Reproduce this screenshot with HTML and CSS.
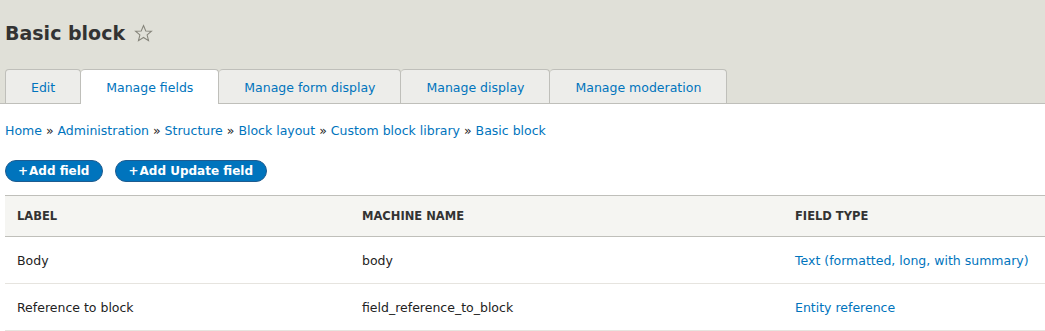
FILE: index.html
```html
<!DOCTYPE html>
<html lang="en">
<head>
<meta charset="utf-8">
<title>Basic block</title>
<link rel="stylesheet" href="styles.css">
</head>
<body>
<header class="page-header">
  <h1 class="page-title">Basic block
    <svg class="star" viewBox="0 0 20 20" width="19" height="19" aria-hidden="true"><path d="M10 1.6 L12.4 7.3 L18.4 7.6 L13.8 11.5 L15.3 17.5 L10 14.2 L4.7 17.5 L6.2 11.5 L1.6 7.6 L7.6 7.3 Z" fill="none" stroke="#85847a" stroke-width="1.1" stroke-linejoin="miter"/></svg>
  </h1>
  <nav class="tabs">
    <a class="tab" href="#">Edit</a>
    <a class="tab is-active" href="#">Manage fields</a>
    <a class="tab" href="#">Manage form display</a>
    <a class="tab" href="#">Manage display</a>
    <a class="tab" href="#">Manage moderation</a>
  </nav>
</header>
<main class="content">
  <nav class="breadcrumb">
    <a href="#">Home</a> » <a href="#">Administration</a> » <a href="#">Structure</a> » <a href="#">Block layout</a> » <a href="#">Custom block library</a> » <a href="#">Basic block</a>
  </nav>
  <div class="actions">
    <a class="button" href="#"><span class="plus">+</span>Add field</a>
    <a class="button" href="#"><span class="plus">+</span>Add Update field</a>
  </div>
  <table class="fields">
    <thead>
      <tr><th class="c1">Label</th><th class="c2">Machine name</th><th class="c3">Field type</th></tr>
    </thead>
    <tbody>
      <tr><td>Body</td><td>body</td><td><a href="#">Text (formatted, long, with summary)</a></td></tr>
      <tr><td>Reference to block</td><td>field_reference_to_block</td><td><a href="#">Entity reference</a></td></tr>
    </tbody>
  </table>
</main>
</body>
</html>
```
FILE: styles.css
```css
html, body { margin: 0; padding: 0; background: #fff; }
body {
  font-family: "DejaVu Sans", "Open Sans", sans-serif;
  font-size: 12.5px;
  color: #222;
}
a { color: #0074bd; text-decoration: none; }

.page-header {
  background: #e0e0d8;
  padding: 17px 0 0 5px;
  border-bottom: 1px solid #bfbfba;
}
.page-title {
  margin: 0;
  font-size: 19px;
  font-weight: bold;
  color: #333;
  line-height: 32px;
  display: flex;
  align-items: center;
  gap: 9px;
}
.star { display: block; }

.tabs {
  display: flex;
  margin-top: 20px;
}
.tab {
  display: block;
  background: #ededea;
  border: 1px solid #bfbfba;
  border-bottom: none;
  border-left: none;
  border-radius: 4px 4px 0 0;
  padding: 0 25px;
  height: 33px;
  line-height: 35px;
  margin-bottom: -1px;
}
.tab:first-child { border-left: 1px solid #bfbfba; }
.tab.is-active {
  background: #fff;
  height: 34px;
  position: relative;
  z-index: 1;
}

.content { padding: 0 0 0 5px; }
.breadcrumb {
  padding-top: 18px;
  line-height: 18px;
}
.actions {
  display: flex;
  gap: 12px;
  margin-top: 20px;
}
.button {
  display: block;
  background: #0074bd;
  border: 1px solid #1e5c90;
  color: #fff;
  font-size: 12px;
  font-weight: bold;
  border-radius: 12px;
  height: 20px;
  line-height: 20px;
  padding: 0 13px 0 12px;
}
.plus { margin-right: 1px; }

.fields {
  margin-top: 13px;
  width: 100%;
  border-collapse: collapse;
}
.fields th {
  background: #f5f5f2;
  border-top: 1px solid #bfbfba;
  border-bottom: 1px solid #bfbfba;
  text-transform: uppercase;
  text-align: left;
  font-size: 11.5px;
  color: #333;
  height: 40px;
  padding: 0 12px;
}
.fields .c1 { width: 321px; }
.fields .c2 { width: 409px; }
.fields td {
  height: 46px;
  padding: 0 12px;
  border-bottom: 1px solid #e6e4df;
}
```
